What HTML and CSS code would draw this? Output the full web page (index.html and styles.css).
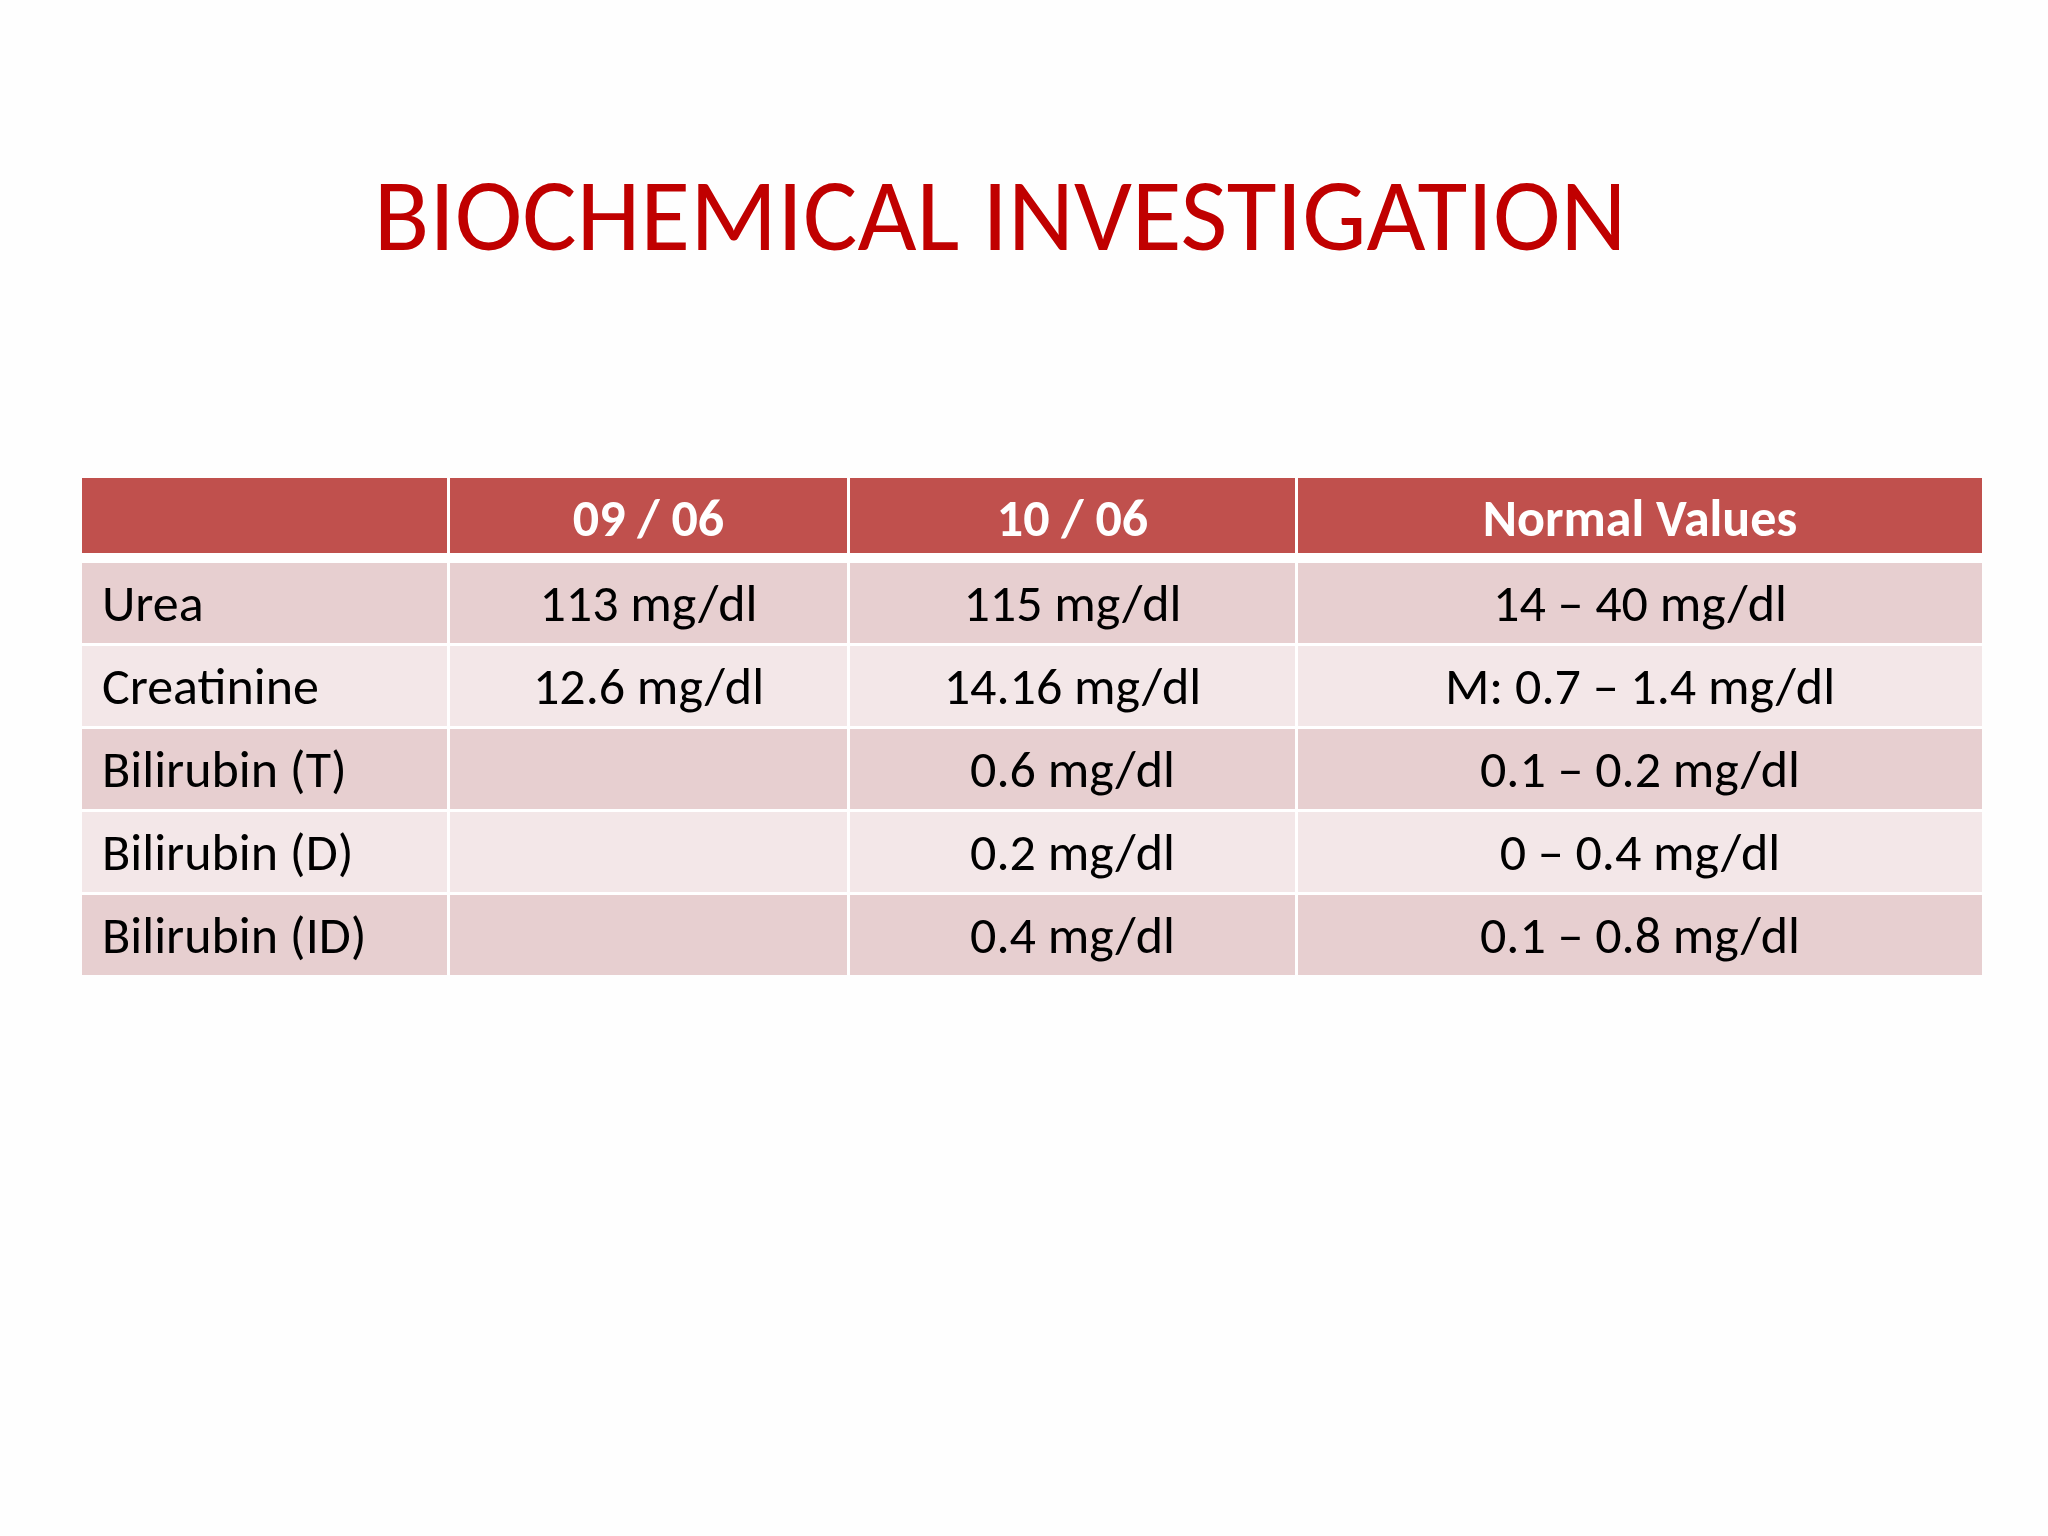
FILE: index.html
```html
<!DOCTYPE html>
<html>
<head>
<meta charset="utf-8">
<link rel="stylesheet" href="styles.css">
</head>
<body>
<div class="slide">
  <h1 class="title">BIOCHEMICAL INVESTIGATION</h1>
  <div class="table">
    <div class="cell head"></div>
    <div class="cell head center">09 / 06</div>
    <div class="cell head center">10 / 06</div>
    <div class="cell head center">Normal Values</div>

    <div class="cell odd">Urea</div>
    <div class="cell odd center">113 mg/dl</div>
    <div class="cell odd center">115 mg/dl</div>
    <div class="cell odd center">14 – 40 mg/dl</div>

    <div class="cell even">Creatinine</div>
    <div class="cell even center">12.6 mg/dl</div>
    <div class="cell even center">14.16 mg/dl</div>
    <div class="cell even center">M: 0.7 – 1.4 mg/dl</div>

    <div class="cell odd">Bilirubin (T)</div>
    <div class="cell odd center"></div>
    <div class="cell odd center">0.6 mg/dl</div>
    <div class="cell odd center">0.1 – 0.2 mg/dl</div>

    <div class="cell even">Bilirubin (D)</div>
    <div class="cell even center"></div>
    <div class="cell even center">0.2 mg/dl</div>
    <div class="cell even center">0 – 0.4 mg/dl</div>

    <div class="cell odd">Bilirubin (ID)</div>
    <div class="cell odd center"></div>
    <div class="cell odd center">0.4 mg/dl</div>
    <div class="cell odd center">0.1 – 0.8 mg/dl</div>
  </div>
</div>
</body>
</html>
```
FILE: styles.css
```css
html, body {
  margin: 0;
  padding: 0;
  background: #fefefe;
}
.slide {
  width: 2048px;
  height: 1536px;
  background: #fefefe;
  font-family: Carlito, Calibri, Lato, "Noto Sans", sans-serif;
  display: flex;
  flex-direction: column;
}
.title {
  margin: 0;
  padding: 160px 48px 0 0;
  height: 110px;
  line-height: 110px;
  text-align: center;
  font-weight: normal;
  font-size: 102px;
  color: #c00000;
}
.table {
  margin: 208px 0 0 82px;
  width: 1900px;
  display: grid;
  grid-template-columns: 365px 397px 445px 684px;
  grid-template-rows: 82px repeat(5, 80px);
  column-gap: 3px;
  row-gap: 3px;
  background: #ffffff;
}
.cell {
  display: flex;
  align-items: center;
  padding: 0 20px;
  font-size: 52px;
  color: #000;
  box-sizing: border-box;
}
.center {
  justify-content: center;
}
.head {
  background: #c0504d;
  color: #fff;
  font-weight: bold;
  border-bottom: 7px solid #ffffff;
  height: 82px;
  padding-top: 4px;
}
.odd {
  background: #e7cfd0;
}
.even {
  background: #f3e7e8;
}
```
